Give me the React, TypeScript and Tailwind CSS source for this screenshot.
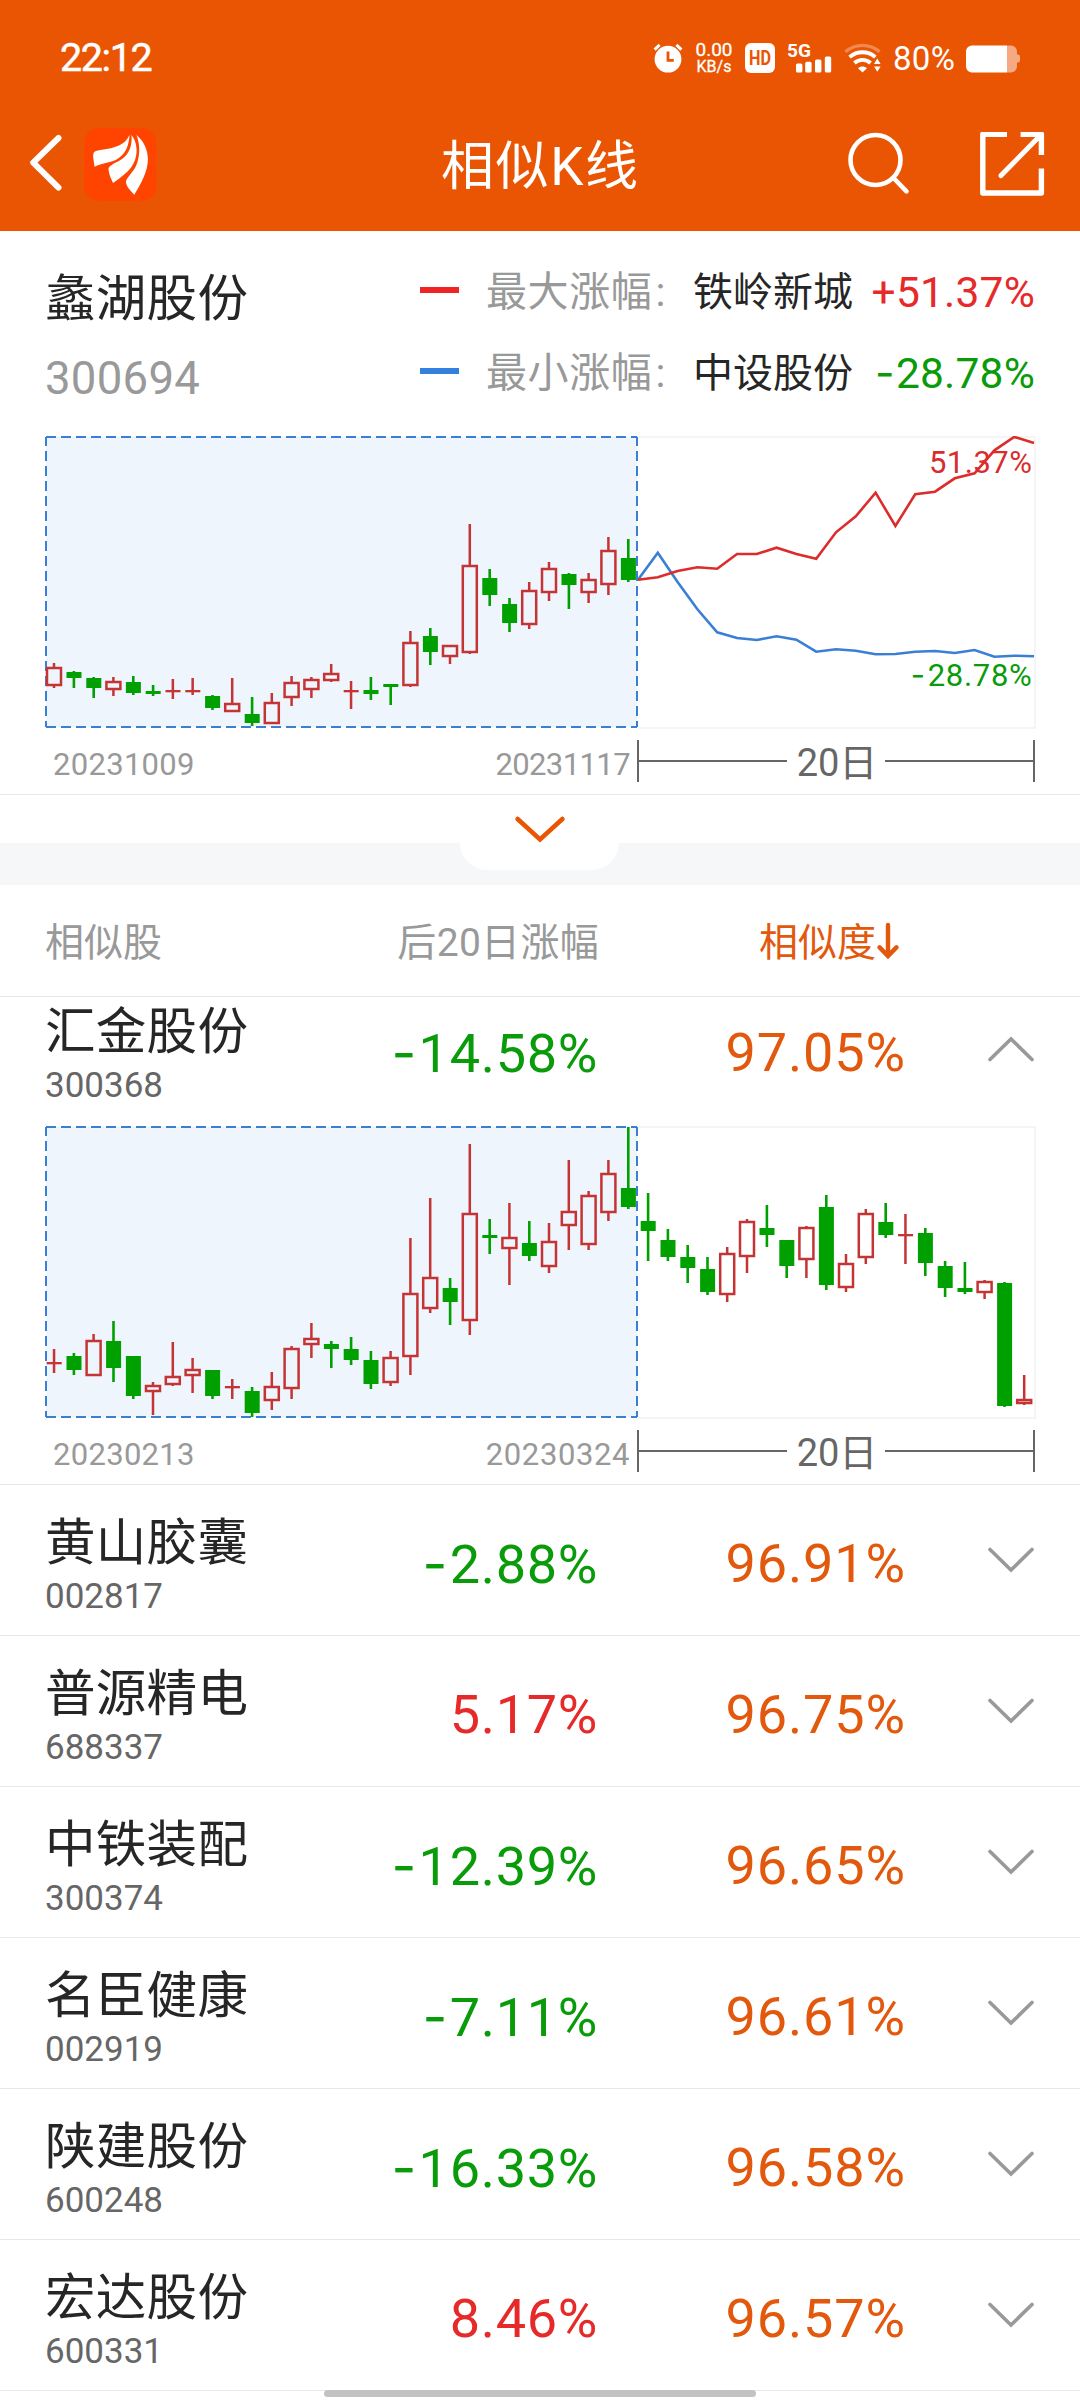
import React from 'react';

// [up/down, high, body top, body bottom, low]
type Candle = ['r' | 'g', number, number, number, number];

interface Stock {
    name: string;
    code: string;
    change: string;
    similarity: string;
}

const RED = '#c53434';
const GREEN = '#00a000';
const BLUE = '#3b7fd4';

const mainCandles: Candle[] = [
    ['r', 227, 231, 250, 252], ['g', 235, 236, 242, 252], ['g', 241, 242, 252, 262], ['r', 241, 245, 254, 260],
    ['g', 240, 246, 257, 259], ['g', 249, 255, 258, 260], ['r', 243, 254, 256, 263], ['r', 242, 254, 256, 259],
    ['g', 259, 260, 272, 274], ['r', 242, 267, 276, 276], ['g', 261, 278, 287, 290], ['r', 257, 266, 288, 288],
    ['r', 240, 246, 262, 270], ['r', 241, 243, 254, 262], ['r', 228, 237, 245, 246], ['r', 245, 254, 256, 273],
    ['g', 241, 254, 258, 264], ['g', 248, 248, 251, 269], ['r', 195, 206, 250, 251], ['g', 192, 200, 216, 229],
    ['r', 209, 209, 221, 228], ['r', 88, 129, 217, 218], ['g', 133, 142, 159, 170], ['g', 162, 168, 187, 196],
    ['r', 146, 154, 189, 193], ['r', 126, 132, 157, 165], ['g', 137, 138, 149, 173], ['r', 137, 143, 157, 167],
    ['r', 101, 114, 149, 159], ['g', 103, 122, 144, 146],
];

const matchCandles: Candle[] = [
    ['r', 223, 236, 238, 247], ['g', 227, 230, 244, 249], ['r', 208, 214, 250, 250], ['g', 195, 215, 242, 256],
    ['g', 230, 230, 270, 273], ['r', 256, 259, 266, 289], ['r', 216, 250, 259, 260], ['r', 232, 243, 250, 267],
    ['g', 244, 244, 270, 273], ['r', 253, 260, 262, 273], ['g', 261, 265, 287, 291], ['r', 246, 260, 275, 284],
    ['r', 220, 222, 263, 273], ['r', 197, 212, 219, 232], ['g', 215, 218, 223, 242], ['g', 211, 223, 234, 239],
    ['g', 225, 234, 258, 263], ['r', 225, 231, 257, 260], ['r', 112, 167, 231, 249], ['r', 72, 151, 183, 187],
    ['g', 152, 162, 176, 199], ['r', 18, 87, 195, 209], ['g', 93, 109, 112, 128], ['r', 77, 111, 123, 159],
    ['g', 95, 117, 130, 135], ['r', 97, 115, 141, 147], ['r', 34, 85, 100, 124], ['r', 65, 69, 119, 124],
    ['r', 34, 47, 87, 95], ['g', 1, 62, 81, 83],
    ['g', 67, 95, 105, 135], ['g', 103, 114, 131, 135], ['g', 119, 131, 142, 157], ['g', 131, 143, 166, 169],
    ['r', 121, 127, 169, 176], ['r', 93, 95, 131, 147], ['g', 79, 102, 109, 121], ['g', 114, 114, 140, 152],
    ['r', 100, 101, 134, 152], ['g', 69, 81, 159, 164], ['r', 128, 137, 162, 166], ['r', 83, 87, 132, 138],
    ['g', 77, 96, 109, 112], ['r', 88, 108, 110, 138], ['g', 102, 107, 137, 150], ['g', 135, 140, 162, 171],
    ['g', 136, 162, 166, 168], ['r', 154, 155, 167, 173], ['g', 156, 157, 280, 281], ['r', 249, 273, 278, 279],
];

const maxLine = [143.7, 141.3, 135, 131.3, 132.7, 118, 118, 111.7, 118, 122.7, 96.3, 80.3, 56.7, 90, 58.3, 55.7, 42.3, 37.3, 14.3, 0.9, 7];
const minLine = [143.7, 116.7, 146, 173.3, 196.3, 202, 204, 200.3, 203.7, 215.7, 213.3, 214.7, 218.3, 218, 215.7, 215, 217, 214, 220.7, 219.7, 220.3];

const stocks: Stock[] = [
    { name: '汇金股份', code: '300368', change: '-14.58%', similarity: '97.05%' },
    { name: '黄山胶囊', code: '002817', change: '-2.88%', similarity: '96.91%' },
    { name: '普源精电', code: '688337', change: '5.17%', similarity: '96.75%' },
    { name: '中铁装配', code: '300374', change: '-12.39%', similarity: '96.65%' },
    { name: '名臣健康', code: '002919', change: '-7.11%', similarity: '96.61%' },
    { name: '陕建股份', code: '600248', change: '-16.33%', similarity: '96.58%' },
    { name: '宏达股份', code: '600331', change: '8.46%', similarity: '96.57%' },
];

const StatusBar = () => (
    <div className="flex h-[115px] items-center pl-[60px] pr-[60px]">
        <span className="pt-[1px] text-[39.5px] leading-none tracking-[-1.4px] [-webkit-text-stroke:0.5px_white]">22:12</span>
        {/* alarm */}
        <svg className="ml-auto" width="30" height="30" viewBox="0 0 30 30" fill="none">
            <circle cx="15" cy="16.2" r="13.4" fill="#fff" />
            <path d="M1.6 6.6L6.6 1.8M28.4 6.6L23.4 1.8" stroke="#fff" strokeWidth="3" />
            <path d="M15 8.6V17.4H20.8" stroke="#ea5504" strokeWidth="2.8" />
        </svg>
        <div className="ml-[12px] flex w-[38px] flex-col items-center [-webkit-text-stroke:0.3px_white]">
            <span className="text-[19px] leading-[17px]">0.00</span>
            <span className="text-[16px] leading-[17px]">KB/s</span>
        </div>
        <svg className="ml-[12px]" width="30" height="30" viewBox="0 0 30 30">
            <rect width="30" height="30" rx="6" fill="#fff" />
            <text x="4" y="21.8" fontSize="20" fontWeight="700" fill="#ea5504" textLength="22" lengthAdjust="spacingAndGlyphs">HD</text>
        </svg>
        <svg className="ml-[12px] overflow-visible" width="45" height="30" viewBox="0 0 45 30" fill="#fff">
            <text x="0" y="14" fontSize="19" fontWeight="700" textLength="24" lengthAdjust="spacingAndGlyphs">5G</text>
            <rect x="9" y="20.5" width="6.4" height="9" rx="1.6" />
            <rect x="18.2" y="18.8" width="6.4" height="10.7" rx="1.6" />
            <rect x="28" y="16.5" width="6.4" height="13" rx="1.6" />
            <rect x="37.8" y="13.5" width="6.4" height="16" rx="1.6" />
        </svg>
        {/* wifi */}
        <svg className="ml-[12px]" width="37" height="30" viewBox="0 0 37 30" fill="none" stroke="#fff">
            <path d="M1.4 8.8C11.4 0.2 25.6 0.2 35.6 8.8" strokeWidth="3.2" opacity="0.3" />
            <path d="M5.6 14.2C13 7.6 24 7.6 31.4 14.2" strokeWidth="3.8" />
            <path d="M10.4 20C15 15.8 22 15.8 26.6 20" strokeWidth="3.8" />
            <path d="M14 25.2C16.6 22.8 20.4 22.8 23 25.2L18.5 29.6Z" fill="#fff" stroke="none" />
            <path d="M30 21L33.3 15.6L36.6 21ZM30 23.4L33.3 28.8L36.6 23.4Z" fill="#fff" stroke="none" />
        </svg>
        <span className="ml-[11px] w-[65px] whitespace-nowrap pl-[1px] pt-[2px] text-[33px] leading-none tracking-[0.3px]">80%</span>
        {/* battery */}
        <svg className="ml-[9px]" width="54" height="30" viewBox="0 0 54 30" fill="#fff">
            <path d="M41 2.5H44C48.5 2.5 51 5 51 9V11.5H52C53.4 11.5 54 12.3 54 13.4V17.6C54 18.7 53.4 19.5 52 19.5H51V23C51 27 48.5 29.5 44 29.5H41Z" opacity="0.5" />
            <path d="M41 2.5H7C2.5 2.5 0 5 0 9V23C0 27 2.5 29.5 7 29.5H41Z" />
        </svg>
    </div>
);

const NavBar = () => (
    <div className="flex h-[98px] items-center pl-[28px] pr-[35px]">
        <svg width="36" height="60" viewBox="0 0 36 60" fill="none" stroke="#fff" strokeWidth="6" strokeLinecap="round" strokeLinejoin="round">
            <path d="M30.5 4L5.2 28.6L30.5 53.6" />
        </svg>
        <svg className="ml-[20px]" width="73" height="73" viewBox="0 0 73 73">
            <rect width="72.5" height="73" rx="15" fill="#ff4400" />
            <g fill="#fff">
                <path d="M45.5 7C43 12 40 15 36 17C28 21 20 21 12 23C9 24 9 27 9.3 30L10.5 38.7C18 35 26 35 32.5 31.5C41 27 45 18 45.5 7Z" />
                <path d="M47.5 7C50 10 52.5 15 52.6 22C52.6 38 42 45 36 50L29 55C27 50 25 47 24.5 41C25 37 32 35 38 31C45 26 48.5 18 47.5 7Z" />
                <path d="M52.4 7C60 13 63.7 22 63.9 31C64 43 57 56 50.3 66.7C46 62 41.5 58 42 53C44 48 49 44 52 38C56 29 56.5 17 52.4 7Z" />
            </g>
        </svg>
        <h1 className="ml-[284px] w-[204px] whitespace-nowrap pt-[5px] text-[53px] font-normal leading-[60px] tracking-[1.6px]">相似K线</h1>
        <svg className="ml-auto" width="64" height="64" viewBox="0 0 64 64" fill="none" stroke="#fff" strokeWidth="4.6" strokeLinecap="round">
            <circle cx="28.5" cy="28" r="25" />
            <path d="M46.5 46L59.5 59.3" />
        </svg>
        <svg className="ml-[69px]" width="65" height="65" viewBox="0 1 65 65" fill="none" stroke="#fff" strokeWidth="5.4" strokeLinejoin="round">
            <path d="M27 3.2H2.8V62H61.4V37.5M40.6 3.2H61.4V24" />
            <path d="M60 4.8L21 44.6" strokeLinecap="round" strokeWidth="5" />
        </svg>
    </div>
);

const Sign = () => <span className="mr-[0.03em] font-['Inter']">-</span>;

const Percent = ({ value }: { value: string }) => (
    value.startsWith('-') ? <><Sign />{value.slice(1)}</> : <>{value}</>
);

interface LegendRowProps {
    bar: string;
    label: string;
    name: string;
    value: string;
    valueColor: string;
}

const LegendRow = ({ bar, label, name, value, valueColor }: LegendRowProps) => (
    <div className="flex h-[81px] items-center">
        <span className={`-mt-[6px] h-[6px] w-[39px] ${bar}`}></span>
        <span className="ml-[27px] w-[208px] whitespace-nowrap text-[41px] tracking-[0.6px] text-[#999]">
            {label}<span className="ml-[3px]">:</span>
        </span>
        <span className="-ml-[1px] whitespace-nowrap text-[40px] text-[#262626]">{name}</span>
        <span className={`ml-auto whitespace-nowrap text-[42.5px] tracking-[0.2px] ${valueColor}`}><Percent value={value} /></span>
    </div>
);

const KLineChart = ({ candles, lines = false }: { candles: Candle[]; lines?: boolean }) => {
    const toPoints = (ys: number[]) => ys.map((y, i) => `${593 + i * 19.8},${y}`).join(' ');

    return (
        <svg className="block" width="992" height="294" viewBox="0 0 992 294" fill="none">
            <path d="M592 1H990V292H592" stroke="#f5f5f5" strokeWidth="2" />
            <rect x="1" y="1" width="591" height="290" fill="#eef5fd" />
            <path d="M1 1H592" stroke={BLUE} strokeWidth="2" strokeDasharray="10 5" />
            <path d="M1 291H592" stroke={BLUE} strokeWidth="2" strokeDasharray="10 5" />
            <path d="M1 291V1M592 291V1" stroke={BLUE} strokeWidth="2" strokeDasharray="10 5" strokeDashoffset="4" />
            {candles.map(([kind, high, top, bottom, low], i) => {
                const x = 9 + i * 19.8;
                if (kind === 'g') {
                    return (
                        <g key={i} fill={GREEN}>
                            <rect x={x - 1.2} y={high} width="2.6" height={low - high} />
                            <rect x={x - 7.3} y={top} width="15" height={bottom - top} />
                        </g>
                    );
                }
                // a flat candle is only a cross
                if (bottom - top <= 2) {
                    return (
                        <g key={i} fill={RED}>
                            <rect x={x - 1.2} y={high} width="2.5" height={low - high} />
                            <rect x={x - 7.3} y={top} width="15" height="2.3" />
                        </g>
                    );
                }
                return (
                    <g key={i} stroke={RED} strokeWidth="2.5">
                        <path d={`M${x} ${high}V${top}M${x} ${bottom}V${low}`} />
                        <rect x={x - 7} y={top + 1} width="14" height={bottom - top - 2} />
                    </g>
                );
            })}
            {lines && (
                <g>
                    <text x="987.5" y="37.3" textAnchor="end" fontSize="31" letterSpacing="0.5" fill="#d92d2d">51.37%</text>
                    <text x="987.5" y="250" textAnchor="end" fontSize="31" letterSpacing="0.7" fill="#0a9b0a">
                        <tspan className="font-['Inter']">-</tspan><tspan dx="2">28.78%</tspan>
                    </text>
                    <polyline points={toPoints(minLine)} stroke={BLUE} strokeWidth="2.6" />
                    <polyline points={toPoints(maxLine)} stroke="#dc2c2c" strokeWidth="2.6" />
                </g>
            )}
        </svg>
    );
};

const ChartAxis = ({ from, to }: { from: string; to: string }) => (
    <div className="flex h-[62px] items-center">
        <div className="flex w-[592px] justify-between pl-[8px] pr-[7px] pt-[8px] text-[31px] tracking-[0.3px] text-[#999]">
            <span>{from}</span>
            <span className={to.endsWith('1117') ? 'tracking-[-0.6px]' : 'tracking-[0.6px]'}>{to}</span>
        </div>
        <div className="flex h-[42px] w-[398px] items-center border-x-2 border-[#666]">
            <span className="h-[2px] w-[148px] bg-[#666]"></span>
            <span className="flex-1 whitespace-nowrap pl-[2px] pt-[4px] text-center text-[38px] leading-[42px] text-[#666]">20日</span>
            <span className="h-[2px] w-[148px] bg-[#666]"></span>
        </div>
    </div>
);

const StockRow = ({ stock, open = false }: { stock: Stock; open?: boolean }) => (
    <div className="flex h-[151px] pl-[45px] pr-[45px]">
        <div className="w-[260px] pt-[29px]">
            <div className="text-[50.5px] leading-[60px] tracking-[0.3px] text-[#262626]">{stock.name}</div>
            <div className="mt-[2px] text-[35px] leading-[44px] text-[#666]">{stock.code}</div>
        </div>
        <div className={`w-[293px] pt-[50px] text-right text-[54px] leading-[60px] tracking-[0.7px] ${stock.change.startsWith('-') ? 'text-[#0a9b0a]' : 'text-[#e62a2a]'}`}>
            <Percent value={stock.change} />
        </div>
        <div className="w-[308px] pt-[50px] text-right text-[54px] leading-[60px] tracking-[0.9px] text-[#e2590e]">{stock.similarity}</div>
        <svg className="ml-auto mt-[61px]" width="48" height="30" viewBox="0 0 48 30" fill="none" stroke="#999" strokeWidth="3.6" strokeLinecap="round">
            <path d={open ? 'M3 25.5L24 5L45 25.5' : 'M3 4.5L24 25L45 4.5'} />
        </svg>
    </div>
);

const App = () => {
    return (
        <div className="relative h-[2400px] w-[1080px] overflow-hidden bg-white font-[Roboto,'Noto_Sans_CJK_SC',sans-serif]">
            <header className="h-[231px] bg-[#ea5504] text-white">
                <StatusBar />
                <NavBar />
            </header>

            <section className="h-[564px] border-b border-[#e8e8e8] px-[45px]">
                <div className="flex h-[205px]">
                    <div className="w-[375px] pt-[38px]">
                        <div className="text-[50.5px] leading-[60px] tracking-[0.3px] text-[#262626]">蠡湖股份</div>
                        <div className="mt-[22px] text-[45.5px] leading-[56px] tracking-[0.3px] text-[#999]">300694</div>
                    </div>
                    <div className="flex-1 pt-[21px]">
                        <LegendRow bar="bg-[#f02424]" label="最大涨幅" name="铁岭新城" value="+51.37%" valueColor="text-[#e62a2a]" />
                        <LegendRow bar="bg-[#3380dd]" label="最小涨幅" name="中设股份" value="-28.78%" valueColor="text-[#0a9b0a]" />
                    </div>
                </div>
                <KLineChart candles={mainCandles} lines />
                <ChartAxis from="20231009" to="20231117" />
            </section>

            <div className="h-[48px]"></div>
            <div className="h-[42px] bg-[#f6f7f9]">
                <div className="ml-[460px] h-[27px] w-[159px] rounded-b-[27px] bg-white">
                    <svg className="relative -top-[28px] mx-auto" width="52" height="30" viewBox="0 0 52 30" fill="none" stroke="#ea5504" strokeWidth="4.6" strokeLinecap="round">
                        <path d="M3.6 4L26 24.4L48.4 4" />
                    </svg>
                </div>
            </div>

            <div className="flex h-[112px] items-center border-b border-[#e8e8e8] pl-[45px] text-[39px] text-[#999]">
                <span className="w-[260px] pt-[5px]">相似股</span>
                <span className="w-[294px] pt-[5px] text-right tracking-[0.3px]">后20日涨幅</span>
                <span className="w-[277px] pt-[5px] text-right text-[#e2590e]">相似度</span>
                <svg className="ml-[1px]" width="22" height="38" viewBox="0 0 22 38" fill="none" stroke="#e2590e" strokeWidth="4.4" strokeLinecap="round">
                    <path d="M11 3V33M2.6 25.4L11 34L19.4 25.4" />
                </svg>
            </div>

            {/* the open row is scrolled a little under the table header */}
            <div className="h-[488px] overflow-hidden border-b border-[#e8e8e8]">
                <div className="-mt-[24px]">
                    <StockRow stock={stocks[0]} open />
                </div>
                <div className="mt-[2px] px-[45px]">
                    <KLineChart candles={matchCandles} />
                    <ChartAxis from="20230213" to="20230324" />
                </div>
            </div>

            {stocks.slice(1).map((stock) => (
                <div key={stock.code} className="h-[151px] overflow-hidden border-b border-[#e8e8e8]">
                    <div className="-mt-[1.5px]">
                        <StockRow stock={stock} />
                    </div>
                </div>
            ))}

            <div className="absolute bottom-[3px] left-[324px] h-[7px] w-[432px] rounded-full bg-[#c2c2c2]"></div>
        </div>
    );
};

export default App;
